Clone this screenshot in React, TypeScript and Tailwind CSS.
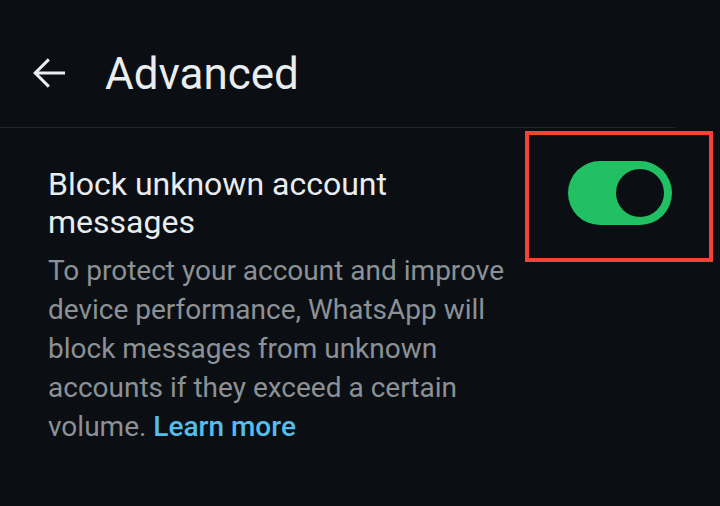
import React from "react";

export default function App() {
  return (
    <div
      className="w-[720px] h-[506px] bg-[#0b0f13] overflow-hidden"
      style={{ fontFamily: "Roboto, 'Noto Sans', sans-serif" }}
    >
      <div className="flex items-start h-[127px] pt-[48px]">
        <svg
          className="ml-[25px] mt-px shrink-0"
          width="48"
          height="48"
          viewBox="0 0 24 24"
          fill="#e9edef"
        >
          <path d="M20 11.25H6.9l5.55-5.55-1.06-1.06L4.03 12l7.36 7.36 1.06-1.06-5.55-5.55H20z" />
        </svg>
        <div className="ml-[32px] text-[44px] leading-[53px] text-[#e9edef]">Advanced</div>
      </div>
      <div className="h-px w-[675px] bg-[#22262a]" />
      <div className="flex items-start">
        <div className="w-[525px] shrink-0 pl-[48px] pr-[4px] pt-[37px]">
          <div className="text-[32px] leading-[38px] text-[#e9edef]">
            Block unknown account messages
          </div>
          <div className="mt-[10px] text-[28px] leading-[39px] text-[#8c9196]">
            To protect your account and improve device performance, WhatsApp will block messages
            from unknown accounts if they exceed a certain volume.{" "}
            <span className="text-[#53bdeb] font-medium">Learn more</span>
          </div>
        </div>
        <div className="mt-[3px] w-[188px] h-[131px] border-4 border-[#f44336] flex items-center justify-center pb-[7px]">
          <div className="ml-[2px] w-[104px] h-[64px] rounded-full bg-[#21c063] flex items-center justify-end pr-[8px]">
            <div className="w-[48px] h-[48px] rounded-full bg-[#0b0f13]" />
          </div>
        </div>
      </div>
    </div>
  );
}
